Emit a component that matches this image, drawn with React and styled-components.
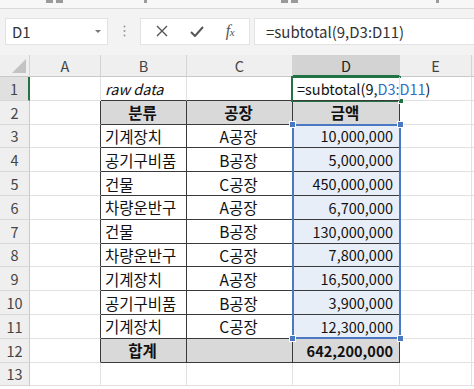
import styled, { createGlobalStyle } from "styled-components";

const GlobalStyle = createGlobalStyle`
  html, body {
    margin: 0;
    padding: 0;
    background: #ffffff;
    overflow: hidden;
  }
  body {
    font-family: "Noto Sans CJK KR", "Noto Sans", sans-serif;
  }
`;

const Page = styled.div`
  width: 474px;
  height: 389px;
  overflow: hidden;
  background: #ffffff;
`;

const Ribbon = styled.div`
  height: 8px;
  background: #f7f7f7;
  border-bottom: 1px solid #dadada;
  box-shadow: 0 1px 2px rgba(0, 0, 0, 0.08);
  display: flex;
  align-items: flex-start;
  gap: 6px;
  padding-left: 46px;
`;

const RibbonMark = styled.span`
  width: ${(p) => p.w}px;
  height: 3px;
  margin-left: ${(p) => p.ml || 0}px;
  background: #9a9a9a;
`;

const FormulaBar = styled.div`
  display: flex;
  align-items: center;
  height: 46px;
  padding: 0 0 2px 5px;
  box-sizing: border-box;
  background: #f3f3f3;
`;

const NameBox = styled.div`
  width: 103px;
  height: 27px;
  box-sizing: border-box;
  background: #ffffff;
  border: 1px solid #e2e2e2;
  display: flex;
  align-items: center;
  justify-content: space-between;
  padding: 0 6px 0 6px;
  font-size: 15px;
  color: #333;
`;

const Caret = styled.span`
  width: 0;
  height: 0;
  border-left: 3px solid transparent;
  border-right: 3px solid transparent;
  border-top: 3px solid #777;
`;

const Grip = styled.div`
  width: 32px;
  display: flex;
  justify-content: center;
  svg {
    display: block;
  }
`;

const FxBox = styled.div`
  width: 110px;
  height: 27px;
  box-sizing: border-box;
  background: #ffffff;
  border: 1px solid #e2e2e2;
  display: flex;
  align-items: center;
  justify-content: space-around;
  padding: 0 4px;
`;

const FxLabel = styled.span`
  font-family: "Liberation Serif", serif;
  font-style: italic;
  font-size: 16px;
  color: #555;
  letter-spacing: -0.5px;
  sub {
    font-size: 11px;
    vertical-align: baseline;
  }
`;

const FormulaInput = styled.div`
  flex: 1;
  height: 27px;
  margin-left: 4px;
  box-sizing: border-box;
  background: #ffffff;
  border: 1px solid #e2e2e2;
  border-right: none;
  display: flex;
  align-items: center;
  padding-left: 11px;
  font-size: 15px;
  color: #333;
`;

const Sheet = styled.div`
  display: grid;
  grid-template-columns: 30px 71px 86px 106px 107px 72px 1fr;
  grid-template-rows: 22px repeat(13, 23.8px);
`;

const Corner = styled.div`
  grid-row: 1;
  grid-column: 1;
  background: #efefef;
  border-right: 1px solid #d4d4d4;
  border-bottom: 1px solid #c8c8c8;
  position: relative;
  &::after {
    content: "";
    position: absolute;
    right: 3px;
    bottom: 3px;
    border-left: 14px solid transparent;
    border-bottom: 14px solid #c3c3c3;
  }
`;

const ColHead = styled.div`
  grid-row: 1;
  grid-column: ${(p) => p.c};
  background: ${(p) => (p.active ? "#d3d3d3" : "#efefef")};
  border-right: 1px solid #d4d4d4;
  border-bottom: ${(p) => (p.active ? "2px solid #217346" : "1px solid #c8c8c8")};
  display: flex;
  align-items: center;
  justify-content: center;
  font-size: 14.5px;
  color: ${(p) => (p.active ? "#222" : "#444")};
`;

const RowHead = styled.div`
  grid-row: ${(p) => p.r};
  grid-column: 1;
  background: ${(p) => (p.active ? "#e0e0e0" : "#efefef")};
  border-right: ${(p) => (p.active ? "2px solid #217346" : "1px solid #c8c8c8")};
  border-bottom: 1px solid #d8d8d8;
  display: flex;
  align-items: center;
  justify-content: center;
  font-size: 14.5px;
  color: #444;
`;

const Cell = styled.div`
  grid-row: ${(p) => p.r};
  grid-column: ${(p) => p.c};
  position: relative;
  z-index: ${(p) => (p.spill ? 4 : "auto")};
  box-sizing: border-box;
  background: ${(p) => (p.spill ? "transparent" : p.fill || "#ffffff")};
  border-right: 1px solid ${(p) => (p.darkR ? "#3a3a3a" : "#e1e1e1")};
  border-bottom: 1px solid ${(p) => (p.darkB ? "#3a3a3a" : "#e1e1e1")};
  display: flex;
  align-items: center;
  justify-content: ${(p) =>
    p.align === "right" ? "flex-end" : p.align === "center" ? "center" : "flex-start"};
  padding: 0 6px 0 4px;
  font-size: ${(p) => (p.num ? "14.5px" : "15.5px")};
  font-weight: ${(p) => (p.bold ? 700 : 400)};
  font-style: ${(p) => (p.italic ? "italic" : "normal")};
  color: #111;
  white-space: nowrap;
  overflow: visible;
`;

const FormulaText = styled.span`
  color: #111;
  span {
    color: #2f6fc4;
  }
`;

const RangeBox = styled.div`
  grid-column: 5;
  grid-row: 4 / 13;
  margin: -1px -1px 0 -1px;
  border: 2px solid #4a78c2;
  position: relative;
  pointer-events: none;
  z-index: 2;
`;

const Handle = styled.span`
  position: absolute;
  width: 5px;
  height: 5px;
  background: #4a78c2;
  border: 1px solid #ffffff;
  ${(p) => (p.top ? "top: -5px;" : "bottom: -5px;")}
  ${(p) => (p.right ? "right: -5px;" : "left: -5px;")}
`;

const ActiveBox = styled.div`
  grid-column: 5;
  grid-row: 2;
  margin: -1px -1px -1px -2px;
  border: 2px solid #217346;
  border-right: 0;
  pointer-events: none;
  z-index: 3;
  position: relative;
  &::after {
    content: "";
    position: absolute;
    right: -3px;
    bottom: -4px;
    width: 4px;
    height: 4px;
    background: #217346;
    border: 1px solid #fff;
  }
`;

const rows = [
  ["기계장치", "A공장", "10,000,000"],
  ["공기구비품", "B공장", "5,000,000"],
  ["건물", "C공장", "450,000,000"],
  ["차량운반구", "A공장", "6,700,000"],
  ["건물", "B공장", "130,000,000"],
  ["차량운반구", "C공장", "7,800,000"],
  ["기계장치", "A공장", "16,500,000"],
  ["공기구비품", "B공장", "3,900,000"],
  ["기계장치", "C공장", "12,300,000"],
];

const App = () => {
  const cells = [];
  // header row
  cells.push(<Corner key="corner" />);
  ["A", "B", "C", "D", "E", ""].forEach((c, i) =>
    cells.push(
      <ColHead key={"h" + i} c={i + 2} active={c === "D"}>
        {c}
      </ColHead>
    )
  );

  // row 1 (grid row 2)
  cells.push(<RowHead key="r1" r={2} active>1</RowHead>);
  cells.push(<Cell key="1a" r={2} c={2} />);
  cells.push(<Cell key="1b" r={2} c={3} darkB italic num>raw data</Cell>);
  cells.push(<Cell key="1c" r={2} c={4} darkB />);
  cells.push(
    <Cell key="1d" r={2} c={5} darkB num spill>
      <FormulaText>
        =subtotal(9,<span>D3:D11</span>)
      </FormulaText>
    </Cell>
  );
  cells.push(<Cell key="1e" r={2} c={6} />);
  cells.push(<Cell key="1f" r={2} c={7} />);

  // row 2 headers
  cells.push(<RowHead key="r2" r={3}>2</RowHead>);
  cells.push(<Cell key="2a" r={3} c={2} darkR />);
  cells.push(<Cell key="2b" r={3} c={3} darkR darkB fill="#d9d9d9" bold align="center">분류</Cell>);
  cells.push(<Cell key="2c" r={3} c={4} darkR darkB fill="#d9d9d9" bold align="center">공장</Cell>);
  cells.push(<Cell key="2d" r={3} c={5} darkR darkB fill="#d9d9d9" bold align="center">금액</Cell>);
  cells.push(<Cell key="2e" r={3} c={6} />);
  cells.push(<Cell key="2f" r={3} c={7} />);

  rows.forEach((row, i) => {
    const n = i + 3;
    const r = n + 1;
    cells.push(<RowHead key={"r" + n} r={r}>{n}</RowHead>);
    cells.push(<Cell key={n + "a"} r={r} c={2} darkR />);
    cells.push(<Cell key={n + "b"} r={r} c={3} darkR darkB>{row[0]}</Cell>);
    cells.push(<Cell key={n + "c"} r={r} c={4} darkR darkB align="center">{row[1]}</Cell>);
    cells.push(
      <Cell key={n + "d"} r={r} c={5} darkR darkB num fill="#e8eef8" align="right">
        {row[2]}
      </Cell>
    );
    cells.push(<Cell key={n + "e"} r={r} c={6} />);
    cells.push(<Cell key={n + "f"} r={r} c={7} />);
  });

  // row 12 total
  cells.push(<RowHead key="r12" r={13}>12</RowHead>);
  cells.push(<Cell key="12a" r={13} c={2} darkR />);
  cells.push(<Cell key="12b" r={13} c={3} darkR darkB fill="#d9d9d9" bold align="center">합계</Cell>);
  cells.push(<Cell key="12c" r={13} c={4} darkR darkB fill="#d9d9d9" />);
  cells.push(
    <Cell key="12d" r={13} c={5} darkR darkB num fill="#d9d9d9" bold align="right">
      642,200,000
    </Cell>
  );
  cells.push(<Cell key="12e" r={13} c={6} />);
  cells.push(<Cell key="12f" r={13} c={7} />);

  // row 13
  cells.push(<RowHead key="r13" r={14}>13</RowHead>);
  [2, 3, 4, 5, 6, 7].forEach((c) => cells.push(<Cell key={"13" + c} r={14} c={c} />));

  return (
    <Page>
      <GlobalStyle />
      <Ribbon>
        <RibbonMark w={7} />
        <RibbonMark w={7} ml={-3} />
        <RibbonMark w={3} ml={75} />
        <RibbonMark w={7} ml={128} />
        <RibbonMark w={7} ml={-3} />
        <RibbonMark w={3} ml={132} />
      </Ribbon>
      <FormulaBar>
        <NameBox>
          D1
          <Caret />
        </NameBox>
        <Grip>
          <svg width="3" height="12" viewBox="0 0 3 12">
            <circle cx="1.5" cy="1.5" r="1" fill="#999" />
            <circle cx="1.5" cy="6" r="1" fill="#999" />
            <circle cx="1.5" cy="10.5" r="1" fill="#999" />
          </svg>
        </Grip>
        <FxBox>
          <svg width="12" height="12" viewBox="0 0 12 12">
            <path d="M1 1 L11 11 M11 1 L1 11" stroke="#555" strokeWidth="1.4" fill="none" />
          </svg>
          <svg width="14" height="11" viewBox="0 0 14 11">
            <path d="M1 6 L5 10 L13 1" stroke="#555" strokeWidth="2" fill="none" />
          </svg>
          <FxLabel>
            f<sub>x</sub>
          </FxLabel>
        </FxBox>
        <FormulaInput>=subtotal(9,D3:D11)</FormulaInput>
      </FormulaBar>
      <Sheet>
        {cells}
        <ActiveBox />
        <RangeBox>
          <Handle top />
          <Handle top right />
          <Handle />
          <Handle right />
        </RangeBox>
      </Sheet>
    </Page>
  );
};

export default App;
